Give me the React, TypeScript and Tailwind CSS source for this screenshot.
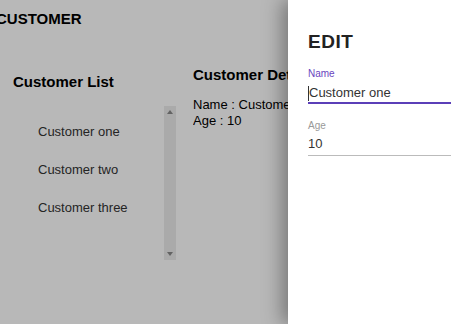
import React from 'react'

const customers = ['Customer one', 'Customer two', 'Customer three']

const ScrollArrow = ({ up }: { up?: boolean }) => (
  <svg width="6" height="4" viewBox="0 0 6 4" className="mx-auto">
    {up ? <path d="M0 4 L3 0 L6 4 Z" fill="#8a8a8a" /> : <path d="M0 0 L3 4 L6 0 Z" fill="#8a8a8a" />}
  </svg>
)

export default function App() {
  return (
    <div className="relative w-[474px] h-[324px] overflow-hidden bg-white font-['Liberation_Sans',Arial,sans-serif] text-black">
      {/* Page */}
      <div className="pt-[10px]">
        <h1 className="-ml-[4px] text-[15px] leading-[18px] font-bold">CUSTOMER</h1>
        <div className="flex">
          {/* Customer list */}
          <div className="ml-[13px] w-[163px] pt-[45px]">
            <h2 className="text-[15px] leading-[18px] font-bold">Customer List</h2>
            <div className="mt-[15px] flex h-[154px]">
              <ul className="flex-1 pt-[7px] pl-[25px]">
                {customers.map((c) => (
                  <li key={c} className="h-[38px] flex items-center text-[13px] text-[#333]">
                    {c}
                  </li>
                ))}
              </ul>
              <div className="w-[12px] bg-[#ececec] flex flex-col justify-between py-[4px]">
                <ScrollArrow up />
                <ScrollArrow />
              </div>
            </div>
          </div>
          {/* Customer details, partly hidden behind the drawer */}
          <div className="ml-[17px] w-[95px] overflow-hidden pt-[38px] whitespace-nowrap">
            <h2 className="text-[15px] leading-[18px] font-bold">Customer Details</h2>
            <div className="mt-[13px] text-[13px] leading-[16px]">
              <p>Name : Customer one</p>
              <p>Age : 10</p>
            </div>
          </div>
        </div>
      </div>

      {/* Backdrop */}
      <div className="absolute inset-0 bg-black/[0.28]" />

      {/* Drawer */}
      <div className="absolute top-0 right-0 h-full w-[186px] bg-white pl-[20px] pr-[23px] pt-[31px] shadow-[-6px_0_18px_rgba(0,0,0,0.35)]">
        <h2 className="text-[19px] leading-[22px] font-bold tracking-[0.5px] text-[#222]">EDIT</h2>
        <div className="mt-[15px]">
          <label className="block text-[10px] leading-[12px] text-[#6a45c0]">Name</label>
          <div className="mt-[6px] h-[18px] flex items-center border-b-2 border-[#5b3fb8] pb-[2px]">
            <span className="w-[1px] h-[15px] bg-[#333]" />
            <span className="text-[13px] leading-[16px] text-[#333]">Customer one</span>
          </div>
        </div>
        <div className="mt-[16px]">
          <label className="block text-[10px] leading-[12px] text-[#999]">Age</label>
          <div className="mt-[3px] h-[21px] flex items-center border-b border-[#bbb] pb-[3px]">
            <span className="text-[13px] leading-[16px] text-[#333]">10</span>
          </div>
        </div>
      </div>
    </div>
  )
}
